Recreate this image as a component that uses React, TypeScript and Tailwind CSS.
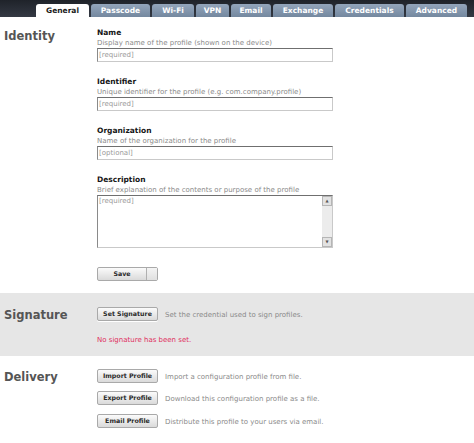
import React from "react";

const tabs = [
  { label: "General", w: "w-[53px]", active: true },
  { label: "Passcode", w: "w-[59px]" },
  { label: "Wi-Fi", w: "w-[42px]" },
  { label: "VPN", w: "w-[33px]" },
  { label: "Email", w: "w-[40px]" },
  { label: "Exchange", w: "w-[60px]" },
  { label: "Credentials", w: "w-[69px]" },
  { label: "Advanced", w: "w-[61px]" },
];

function Field({ label, desc, placeholder }: { label: string; desc: string; placeholder: string }) {
  return (
    <div className="flex flex-col">
      <div className="text-[7.5px] leading-[10px] font-bold text-[#151515]">{label}</div>
      <div className="text-[7px] leading-[10px] text-[#8a8a8a]">{desc}</div>
      <div className="h-[14px] w-[236px] border border-[#c9c9c9] border-t-[#6f6f6f] border-l-[#8a8a8a] bg-white pl-[1px] text-[7px] leading-[12px] text-[#9a9a9a]">
        {placeholder}
      </div>
    </div>
  );
}

function Btn({ children }: { children: React.ReactNode }) {
  return (
    <div className="flex h-[14px] w-[61px] shrink-0 items-center justify-center rounded-[2px] border border-[#a9a9a9] bg-gradient-to-b from-[#fbfbfb] to-[#dadada] text-[6.3px] font-bold text-[#2a2a2a] shadow-[0_1px_0_#ffffff]">
      {children}
    </div>
  );
}

function Heading({ children }: { children: React.ReactNode }) {
  return (
    <div className="w-[97px] shrink-0 pl-[4px] text-[11.5px] leading-[16px] font-bold text-[#555]">{children}</div>
  );
}

export default function App() {
  return (
    <div className="h-[443px] w-[474px] overflow-hidden bg-white font-['DejaVu_Sans',sans-serif]">
      <div className="flex h-[17px] items-end gap-[2px] bg-gradient-to-b from-[#1f232a] to-[#343943] pl-[36px]">
        {tabs.map((t) => (
          <div
            key={t.label}
            className={
              t.active
                ? `${t.w} flex h-[13px] items-center justify-center rounded-t-[3px] bg-white text-[7.5px] font-bold text-[#1a1a1a]`
                : `${t.w} flex h-[13px] items-center justify-center rounded-t-[3px] bg-gradient-to-b from-[#93a5bb] to-[#74889f] text-[7.5px] font-bold text-white`
            }
          >
            {t.label}
          </div>
        ))}
      </div>

      <div className="flex pt-[11px] pb-[12px]">
        <Heading>Identity</Heading>
        <div className="flex flex-col">
          <Field label="Name" desc="Display name of the profile (shown on the device)" placeholder="[required]" />
          <div className="h-[15px]" />
          <Field label="Identifier" desc="Unique identifier for the profile (e.g. com.company.profile)" placeholder="[required]" />
          <div className="h-[15px]" />
          <Field label="Organization" desc="Name of the organization for the profile" placeholder="[optional]" />
          <div className="h-[15px]" />
          <div className="flex flex-col">
            <div className="text-[7.5px] leading-[10px] font-bold text-[#151515]">Description</div>
            <div className="text-[7px] leading-[10px] text-[#8a8a8a]">Brief explanation of the contents or purpose of the profile</div>
            <div className="flex h-[53px] w-[236px] border border-[#c9c9c9] border-t-[#6f6f6f] border-l-[#8a8a8a] bg-white">
              <div className="flex-1 pl-[1px] text-[7px] leading-[10px] text-[#9a9a9a]">[required]</div>
              <div className="flex w-[10px] flex-col bg-[#ececec]">
                <div className="flex h-[10px] items-center justify-center border border-[#b5b5b5] bg-[#e2e2e2] text-[4px] text-[#555]">▲</div>
                <div className="flex-1" />
                <div className="flex h-[10px] items-center justify-center border border-[#b5b5b5] bg-[#e2e2e2] text-[4px] text-[#555]">▼</div>
              </div>
            </div>
          </div>
          <div className="mt-[19px] flex h-[14px] w-[61px] rounded-[2px] border border-[#a9a9a9] bg-gradient-to-b from-[#fbfbfb] to-[#dadada] shadow-[0_1px_0_#ffffff]">
            <div className="flex w-[48px] items-center justify-center text-[6.3px] font-bold text-[#2a2a2a]">Save</div>
            <div className="flex-1 border-l border-[#b0b0b0] bg-gradient-to-b from-[#f4f4f4] to-[#e0e0e0]" />
          </div>
        </div>
      </div>

      <div className="flex bg-[#e6e6e6] pt-[14px] pb-[11px]">
        <Heading>Signature</Heading>
        <div className="flex flex-col">
          <div className="flex items-center gap-[7px]">
            <Btn>Set Signature</Btn>
            <div className="pt-[2px] text-[7px] text-[#8a8a8a]">Set the credential used to sign profiles.</div>
          </div>
          <div className="mt-[14px] text-[7px] leading-[10px] text-[#e0305e]">No signature has been set.</div>
        </div>
      </div>

      <div className="flex pt-[13px]">
        <Heading>Delivery</Heading>
        <div className="flex flex-col gap-[8px]">
          <div className="flex items-center gap-[7px]">
            <Btn>Import Profile</Btn>
            <div className="pt-[2px] text-[7px] text-[#8a8a8a]">Import a configuration profile from file.</div>
          </div>
          <div className="flex items-center gap-[7px]">
            <Btn>Export Profile</Btn>
            <div className="pt-[2px] text-[7px] text-[#8a8a8a]">Download this configuration profile as a file.</div>
          </div>
          <div className="mt-[1px] flex items-center gap-[7px]">
            <Btn>Email Profile</Btn>
            <div className="pt-[2px] text-[7px] text-[#8a8a8a]">Distribute this profile to your users via email.</div>
          </div>
        </div>
      </div>
    </div>
  );
}
